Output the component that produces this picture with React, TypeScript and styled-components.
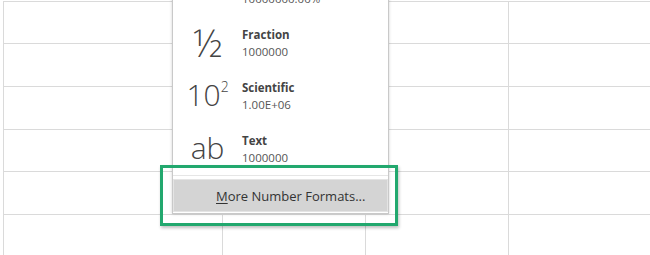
import styled, { createGlobalStyle } from "styled-components";

const GlobalStyle = createGlobalStyle`
  html, body {
    margin: 0;
    padding: 0;
    background: #ffffff;
    overflow: hidden;
  }
  body {
    font-family: "Open Sans", "Liberation Sans", sans-serif;
  }
`;

const Page = styled.div`
  position: relative;
  width: 650px;
  height: 255px;
  overflow: hidden;
  background: #ffffff;
`;

const Sheet = styled.div`
  display: grid;
  grid-template-columns: 218px 142px 142px 142px;
  grid-template-rows: 41px 42px 42px 41px 42px 42px;
  gap: 1px;
  margin: 1px 0 0 3px;
  padding: 1px 0 0 1px;
  width: max-content;
  background: #dadada;
`;

const Cell = styled.div`
  background: #ffffff;
`;

const Menu = styled.div`
  position: absolute;
  left: 172px;
  top: -38px;
  width: 215px;
  display: flex;
  flex-direction: column;
  background: #ffffff;
  border: 1px solid #c9c9c9;
  box-shadow: 0 0 3px rgba(0, 0, 0, 0.18);
`;

const Item = styled.div`
  display: flex;
  align-items: center;
  height: 53px;
`;

const Icon = styled.div<{ $size: number }>`
  flex: 0 0 69px;
  text-align: center;
  font-size: ${(p) => p.$size}px;
  font-weight: 300;
  color: #444444;
  line-height: 1;
  padding-bottom: 2px;
`;

const Sup = styled.span`
  font-size: 14px;
  vertical-align: 14px;
  line-height: 1;
`;

const Labels = styled.div`
  display: flex;
  flex-direction: column;
`;

const Title = styled.span`
  font-size: 11.5px;
  font-weight: 700;
  color: #444444;
  line-height: 17px;
`;

const Sample = styled.span`
  font-size: 11.5px;
  color: #555555;
  line-height: 17px;
`;

const Footer = styled.div`
  border-top: 1px solid #e6e6e6;
  padding: 3px 0 1px;
`;

const MoreButton = styled.div`
  height: 31px;
  display: flex;
  align-items: center;
  padding-left: 42px;
  background: #d4d4d4;
  border: 1px solid #e4e4e4;
  font-size: 13px;
  color: #333333;
  u {
    text-decoration-thickness: 1px;
    text-underline-offset: 2px;
  }
`;

const Highlight = styled.div`
  position: absolute;
  left: 160px;
  top: 165px;
  width: 232px;
  height: 55px;
  border: 3px solid #22a86e;
  box-shadow: 1px 2px 3px rgba(0, 0, 0, 0.25);
  pointer-events: none;
`;

const formats = [
  { icon: <>%</>, size: 30, title: "Percentage", sample: "10000000.00%" },
  { icon: <>½</>, size: 38, title: "Fraction", sample: "1000000" },
  {
    icon: (
      <>
        10<Sup>2</Sup>
      </>
    ),
    size: 30,
    title: "Scientific",
    sample: "1.00E+06",
  },
  { icon: <>ab</>, size: 30, title: "Text", sample: "1000000" },
];

export default function App() {
  return (
    <Page>
      <GlobalStyle />
      <Sheet>
        {[...Array<unknown>(24)].map((_, i) => (
          <Cell key={i} />
        ))}
      </Sheet>
      <Menu>
        {formats.map((f) => (
          <Item key={f.title}>
            <Icon $size={f.size}>{f.icon}</Icon>
            <Labels>
              <Title>{f.title}</Title>
              <Sample>{f.sample}</Sample>
            </Labels>
          </Item>
        ))}
        <Footer>
          <MoreButton>
            <span>
              <u>M</u>ore Number Formats...
            </span>
          </MoreButton>
        </Footer>
      </Menu>
      <Highlight />
    </Page>
  );
}
